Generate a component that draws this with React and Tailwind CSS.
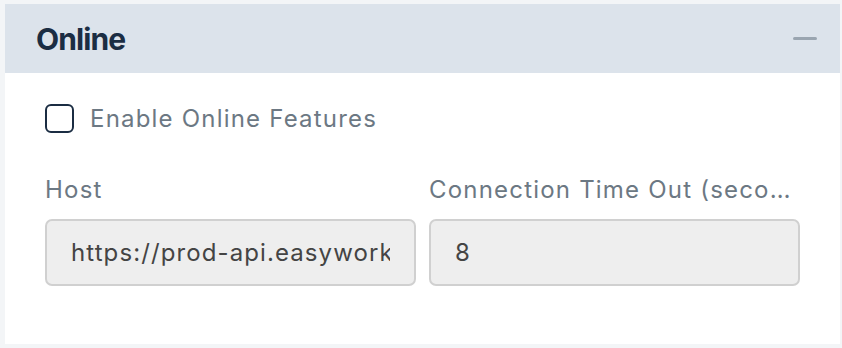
import React from "react";

export default function App() {
  const font = { fontFamily: "Inter, 'Liberation Sans', sans-serif" };
  return (
    <div className="w-[842px] h-[348px] bg-[#f3f5f7] pt-[4px] pl-[5px] pr-[2px]" style={font}>
      <div className="w-[835px] h-[340px] bg-white flex flex-col">
        <div className="h-[69px] bg-[#dce3eb] flex items-center justify-between pl-[31px] pr-[23px]">
          <div className="text-[30px] font-bold text-[#1b2d43] tracking-[-0.9px] leading-none">Online</div>
          <div className="w-[24px] h-[3px] rounded-full bg-[#9aa5b0]" />
        </div>
        <div className="px-[40px] pt-[31px] flex flex-col">
          <label className="flex items-center gap-[16px] h-[29px]">
            <span className="w-[29px] h-[29px] rounded-[6px] border-2 border-[#1b2d43] bg-white shrink-0" />
            <span className="text-[24px] tracking-[1.2px] text-[#6c7883] leading-none">Enable Online Features</span>
          </label>
          <div className="grid grid-cols-2 gap-x-[13px] mt-[42px]">
            <div className="flex flex-col gap-[15px] min-w-0">
              <div className="text-[24px] tracking-[1.2px] leading-[29px] text-[#6c7883] truncate">Host</div>
              <div className="h-[67px] rounded-[7px] border-2 border-[#d0d0d0] bg-[#eeeeee] px-[24px] flex items-center">
                <span className="flex-1 min-w-0 text-[24px] tracking-[1.1px] text-[#444] whitespace-nowrap overflow-hidden">https://prod-api.easyworkforce.cloud</span>
              </div>
            </div>
            <div className="flex flex-col gap-[15px] min-w-0">
              <div className="text-[24px] tracking-[1.2px] leading-[29px] text-[#6c7883] truncate">Connection Time Out (seconds)</div>
              <div className="h-[67px] rounded-[7px] border-2 border-[#d0d0d0] bg-[#eeeeee] px-[24px] flex items-center">
                <span className="text-[24px] text-[#444]">8</span>
              </div>
            </div>
          </div>
        </div>
      </div>
    </div>
  );
}
